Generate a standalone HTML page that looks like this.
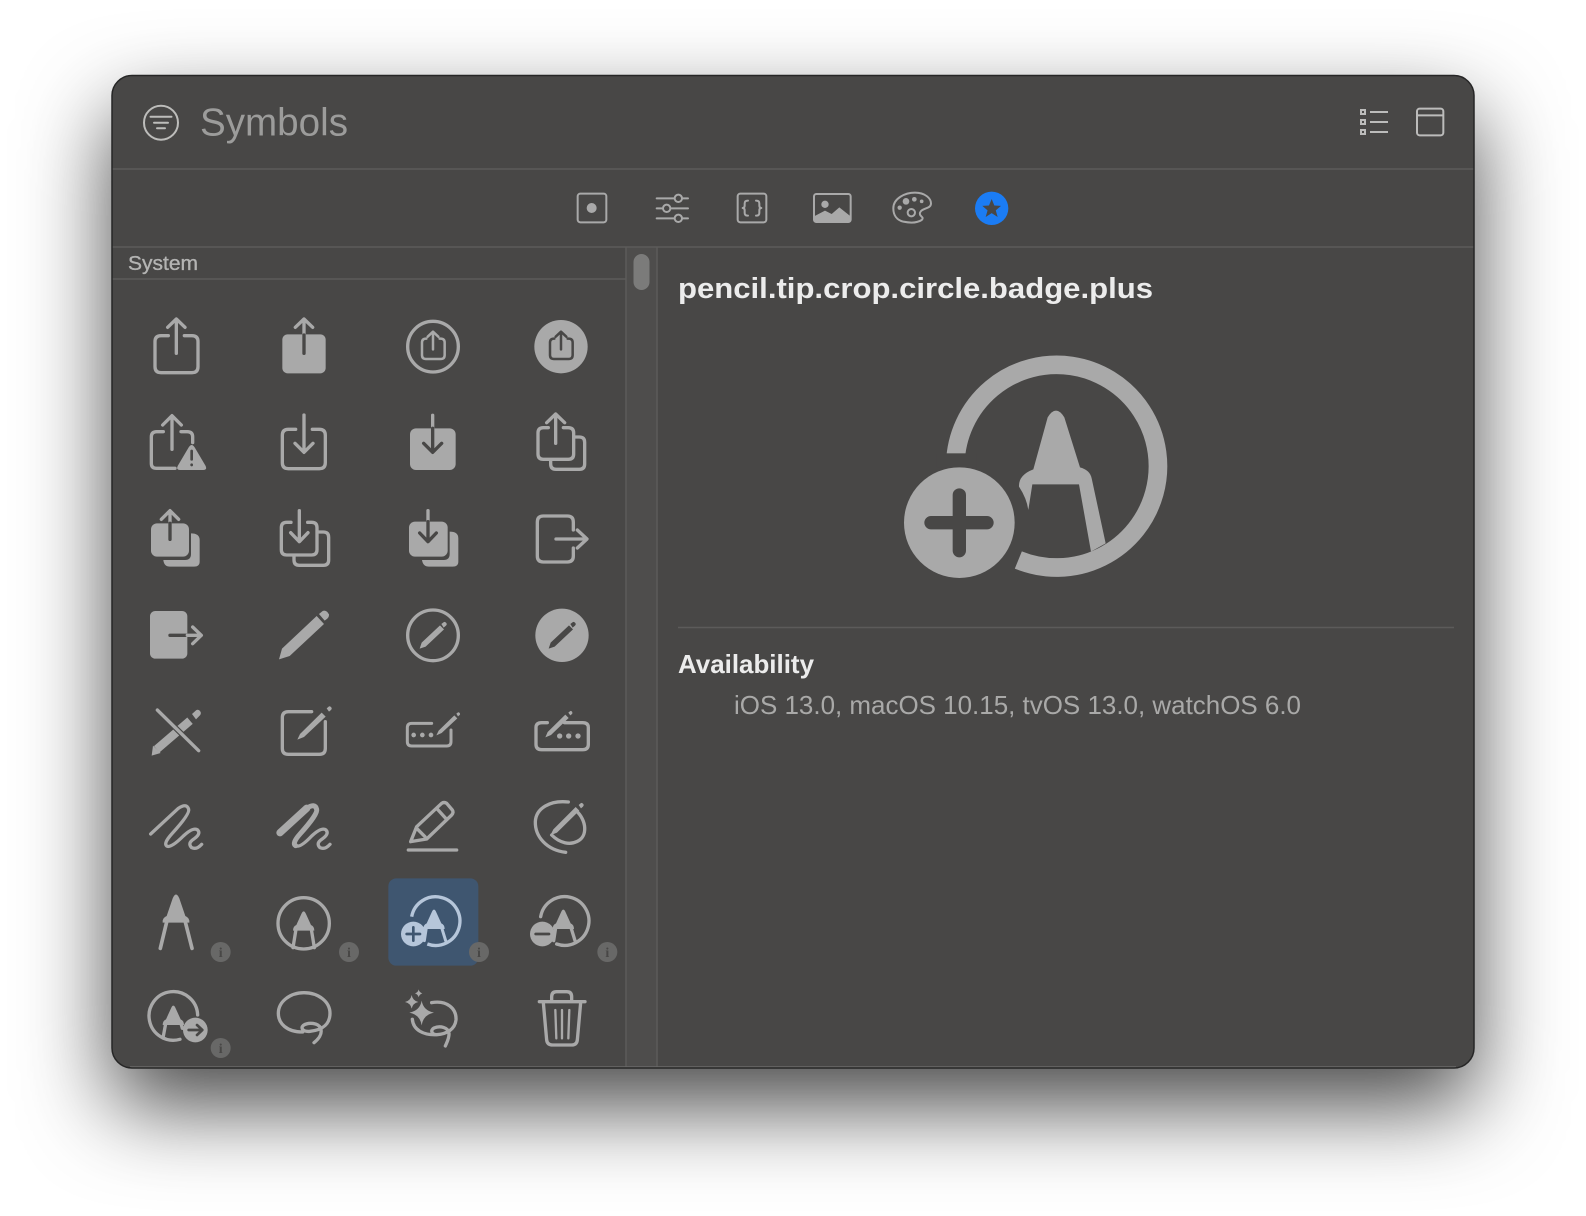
<!DOCTYPE html>
<html lang="en"><head><meta charset="utf-8"><title>Symbols</title>
<style>
html,body{margin:0;padding:0;background:#fff;width:1586px;height:1216px;overflow:hidden}
#win{position:absolute;left:112px;top:75.5px;width:1362px;height:992.5px;border-radius:20px;background:#484746;box-shadow:0 38px 88px rgba(0,0,0,.72)}
svg{position:absolute;left:0;top:0;filter:blur(.35px)}
text{font-family:"Liberation Sans",sans-serif}
.s{fill:none;stroke:#a9a9a9;stroke-width:10;stroke-linecap:round;stroke-linejoin:round}
.f{fill:#a9a9a9}
.d{fill:none;stroke:#484746;stroke-width:10;stroke-linecap:round;stroke-linejoin:round}
.tb{fill:none;stroke:#a9a9a9;stroke-width:6;stroke-linecap:round;stroke-linejoin:round}
.i{fill:#686867}
.it{fill:#484746;font-family:"Liberation Serif",serif;font-weight:bold;font-size:42px;text-anchor:middle}
</style></head><body>
<div id="win"></div>
<svg width="1586" height="1216" viewBox="0 0 1586 1216" xmlns="http://www.w3.org/2000/svg">
<defs><clipPath id="w"><rect x="112" y="75.5" width="1362" height="992.5" rx="20"/></clipPath></defs>
<g clip-path="url(#w)">
<rect x="626" y="247" width="31" height="821" fill="#4e4d4c"/>
<path d="M112 169H1474M112 247H1474M112 279H626M626 247V1068M657 247V1068M678 627.5H1454" stroke="#5c5b5a" stroke-width="1.5" fill="none"/>
<rect x="633.5" y="254" width="16" height="36" rx="8" fill="#7b7b7a"/>
<path d="M130 1067H1456" stroke="#6a6a69" stroke-width="1.5"/>
</g>
<rect x="112" y="75.5" width="1362" height="992.5" rx="20" fill="none" stroke="#262626" stroke-width="1.5"/>

<!-- title bar -->
<circle cx="161" cy="122.7" r="17" fill="none" stroke="#bdbdbb" stroke-width="2"/>
<path d="M150.5 116.7H171.5M154 122.7H168M157 128.3H165" stroke="#bdbdbb" stroke-width="2" stroke-linecap="round"/>
<text x="200" y="135.5" font-size="38.5" fill="#9c9c9b" textLength="148" lengthAdjust="spacingAndGlyphs">Symbols</text>
<text x="128" y="270" font-size="20" fill="#b4b4b3" stroke="#b4b4b3" stroke-width=".35" textLength="70" lengthAdjust="spacingAndGlyphs">System</text>

<g transform="translate(1320,60) scale(.33333)" stroke="#bcbcbb" stroke-width="4" fill="none">
<rect x="120" y="147" width="18" height="18" fill="#bcbcbb" stroke="none"/><rect x="120" y="177" width="18" height="18" fill="#bcbcbb" stroke="none"/><rect x="120" y="207" width="18" height="18" fill="#bcbcbb" stroke="none"/>
<rect x="126" y="153" width="6" height="6" fill="#484746" stroke="none"/><rect x="126" y="183" width="6" height="6" fill="#484746" stroke="none"/><rect x="126" y="213" width="6" height="6" fill="#484746" stroke="none"/>
<path d="M150 156H204M150 186H204M150 216H204" stroke-width="6"/>
<rect x="291" y="146" width="79" height="80" rx="8" stroke-width="6"/><path d="M291 166H370" stroke-width="6"/>
</g>

<!-- toolbar -->
<g transform="translate(550,170) scale(.33333)">
<rect x="83" y="71" width="86" height="86" rx="8" class="tb"/><circle cx="125" cy="114" r="15" class="f"/>
<path class="tb" d="M320 85H372M398 85H414M320 115H336M362 115H414M320 145H372M398 145H414"/>
<circle cx="385" cy="85" r="11" class="tb"/><circle cx="350" cy="115" r="11" class="tb"/><circle cx="385" cy="145" r="11" class="tb"/>
<rect x="563" y="71" width="86" height="86" rx="8" class="tb"/>
<path class="tb" d="M594 92Q584 92 584 100V107Q584 114 578 114Q584 114 584 121V129Q584 137 594 137M618 92Q628 92 628 100V107Q628 114 634 114Q628 114 628 121V129Q628 137 618 137"/>
<rect x="792" y="72" width="110" height="84" rx="7" class="tb"/><circle cx="825" cy="103" r="11" class="f"/>
<path class="f" d="M792 148V139L825 122L845 132L868 112L902 139V148Q902 158 892 158H802Q792 158 792 148Z"/>
<path class="tb" d="M1030 115C1030 85 1065 68 1095 68C1125 68 1143 85 1143 100C1143 118 1115 113 1110 128C1106 140 1125 140 1115 150C1100 160 1075 158 1060 155C1040 150 1030 135 1030 115Z"/>
<circle cx="1068" cy="94" r="10" class="f"/><circle cx="1093" cy="88" r="7" class="f"/><circle cx="1115" cy="94" r="5.5" class="f"/><circle cx="1049" cy="113" r="6.5" class="f"/><circle cx="1084" cy="128" r="11" class="tb"/>
<circle cx="1325" cy="115" r="50" fill="#1b7cf4"/>
<path transform="translate(1325,117)" fill="#484746" d="M0-30L8-10.5L28-9.3L12.3 4L18 24L0 12.5L-18 24L-12.3 4L-28-9.3L-8-10.5Z"/>
</g>

<!-- grid row 1 -->
<g transform="translate(130,70) scale(.33333)">
<path class="s" d="M115 797H93Q75 797 75 815V890Q75 908 93 908H186Q204 908 204 890V815Q204 797 186 797H163M139 750V850M113 772L139 747L165 772"/>
<rect x="457" y="793" width="130" height="117" rx="16" class="f"/>
<path class="s" d="M522 750V795M496 772L522 747L548 772"/><path class="d" d="M522 795V850"/>
<circle cx="909" cy="830" r="76" class="s"/>
<path class="s" style="stroke-width:7.5" d="M889 806H888Q876 806 876 818V855Q876 867 888 867H932Q944 867 944 855V818Q944 806 932 806H929M909 787V838M893 800L909 785L925 800"/>
<circle cx="1293" cy="830" r="80" class="f"/>
<path class="d" style="stroke-width:7.5" d="M1273 806H1272Q1260 806 1260 818V855Q1260 867 1272 867H1316Q1328 867 1328 855V818Q1328 806 1316 806H1313M1293 787V838M1277 800L1293 785L1309 800"/>
</g>

<!-- rows 2-4 -->
<g transform="translate(130,390) scale(.33333)">
<path class="s" d="M100 125H80Q64 125 64 141V220Q64 235 80 235H135M153 125H172Q188 125 188 141V158M126 80V178M98 105L126 77L154 105"/>
<path class="f" d="M176 172Q185 158 194 172L227 228Q232 240 220 240H150Q138 240 143 228Z"/>
<path class="d" style="stroke-width:8" d="M185 183V208M185 224V225"/>
<path class="s" d="M497 118H475Q457 118 457 136V218Q457 236 475 236H568Q586 236 586 218V136Q586 118 568 118H547M522 75V185M495 160L522 187L549 160"/>
<rect x="840" y="115" width="137" height="125" rx="18" class="f"/><path class="s" d="M908 76V115"/><path class="d" d="M908 115V185M881 160L908 187L935 160"/>
<path class="s" d="M1255 113H1240Q1224 113 1224 129V192Q1224 208 1240 208H1315Q1331 208 1331 192V129Q1331 113 1315 113H1300M1333 141H1348Q1364 141 1364 157V222Q1364 238 1348 238H1278Q1262 238 1262 222V210M1277 75V160M1250 98L1277 72L1304 98"/>

<rect x="63" y="400" width="114" height="100" rx="18" class="f"/>
<path class="f" d="M183 430Q209 430 209 450V515Q209 530 192 530H120Q102 530 100 510H165Q183 510 183 492Z"/>
<path class="s" d="M120 365V400M94 388L120 362L146 388"/><path class="d" d="M120 400V448"/>
<path class="s" d="M483 397H470Q454 397 454 413V479Q454 495 470 495H545Q561 495 561 479V413Q561 397 545 397H533M563 426H580Q596 426 596 442V510Q596 526 580 526H508Q492 526 492 510V497M508 362V455M482 428L508 455L534 428"/>
<rect x="837" y="395" width="116" height="105" rx="18" class="f"/>
<path class="f" d="M959 425Q985 425 985 445V515Q985 530 968 530H897Q879 530 876 510H941Q959 510 959 492Z"/>
<path class="s" d="M894 362V395"/><path class="d" d="M894 395V453M869 429L894 455L919 429"/>
<path class="s" d="M1330 420V396Q1330 378 1312 378H1240Q1222 378 1222 396V498Q1222 516 1240 516H1312Q1330 516 1330 498V474M1278 447H1368M1342 420L1371 447L1342 474"/>

<rect x="60" y="663" width="112" height="143" rx="16" class="f"/>
<path class="d" d="M120 736H172"/><path class="s" d="M172 736H212M188 711L214 736L188 761"/>
<path class="f" d="M447 808L456 776L560 678L582 702L479 798ZM567 672L578 663Q586 660 592 666L597 673Q598 680 592 686L584 692Z"/>
<circle cx="909" cy="736" r="76" class="s"/>
<path class="f" d="M869 776L875 758L930 706L942 718L887 770ZM934 702L942 696Q945 695 948 698L950 701Q951 704 948 707L941 713Z"/>
<circle cx="1296" cy="736" r="80" class="f"/>
<path fill="#484746" d="M1256 776L1262 758L1317 706L1329 718L1274 770ZM1321 702L1329 696Q1332 695 1335 698L1337 701Q1338 704 1335 707L1328 713Z"/>
</g>

<!-- rows 5-8 -->
<g transform="translate(130,680) scale(.33333)">
<path stroke="#a9a9a9" stroke-width="25" fill="none" d="M80 208L180 122"/>
<path class="f" d="M65 227L69 197L92 219ZM186 102L198 91Q204 87 209 92L212 96Q214 102 209 107L198 118Z"/>
<path d="M82 90L206 212" stroke="#484746" stroke-width="17" fill="none"/>
<path class="s" d="M82 90L206 212"/>
<path class="s" d="M545 95H475Q457 95 457 113V205Q457 223 475 223H568Q586 223 586 205V125"/>
<path class="f" d="M502 179L510 162L575 98L587 110L522 171ZM590 85L597 79Q600 78 603 81L605 84Q606 87 603 90L597 95Z"/>
<path class="s" style="stroke-width:9" d="M905 130H845Q832 130 832 143V185Q832 198 845 198H950Q963 198 963 185V150"/>
<circle cx="851" cy="165" r="7" class="f"/><circle cx="877" cy="165" r="7" class="f"/><circle cx="903" cy="165" r="7" class="f"/>
<path class="f" d="M919 166L926 152L973 106L982 115L935 159ZM979 101L984 97Q987 96 989 99L990 101Q991 103 989 105L984 109Z"/>
<path class="s" d="M1252 128H1235Q1218 128 1218 143V193Q1218 209 1235 209H1358Q1375 209 1375 193V143Q1375 128 1358 128H1303"/>
<circle cx="1289" cy="168" r="8" class="f"/><circle cx="1316" cy="168" r="8" class="f"/><circle cx="1344" cy="168" r="8" class="f"/>
<path class="f" d="M1246 172L1253 156L1306 104L1316 114L1263 165ZM1315 98L1321 93Q1324 92 1326 95L1327 97Q1328 100 1326 102L1321 106Z"/>

<path class="s" d="M62 462L145 385Q170 368 176 388Q180 402 125 462Q100 490 110 498Q122 506 160 468Q190 440 203 450Q214 462 190 478Q172 490 185 503Q200 510 215 493"/>
<path d="M450 458L530 385" stroke="#a9a9a9" stroke-width="22" stroke-linecap="round" fill="none"/>
<path class="s" style="stroke-width:15" d="M530 385Q555 368 560 388Q564 402 510 462Q485 490 497 497"/>
<path class="s" d="M497 497Q510 505 545 468Q575 440 588 450Q599 462 575 478Q557 490 570 503Q585 510 600 493"/>
<path class="s" d="M835 510H980"/>
<path class="s" d="M842 485L860 440L935 370Q942 365 950 370L967 390Q972 397 965 405L890 477ZM860 445L885 470M920 385L950 418"/>
<path class="s" d="M1307 517C1250 510 1215 470 1216 425C1218 385 1260 360 1315 366M1338 392C1370 420 1375 470 1340 485C1320 495 1290 490 1265 465"/>
<path class="f" d="M1261 466L1270 448L1337 381L1348 392L1281 458ZM1346 375L1353 369Q1356 368 1359 371L1361 374Q1362 377 1359 380L1353 385Z"/>

<!-- pencil tip -->
<path class="f" d="M128 655Q138 632 148 655L166 708Q180 714 178 728H98Q96 714 110 708Z"/>
<path class="s" style="stroke-width:11" d="M111 722L91 805M165 722L186 805"/>
<circle cx="521" cy="730" r="77" class="s"/>
<path class="f" d="M514 702Q521 686 528 702L543 735Q553 739 553 752H489Q489 739 499 735Z"/>
<path class="s" d="M498 748L489 803M544 748L553 803"/>

<rect x="775" y="595" width="270" height="262" rx="24" fill="#3f5670"/>
<path fill="none" stroke="#b6c6da" stroke-width="10" d="M845 710A73 73 0 1 1 892 792"/>
<path fill="#b6c6da" d="M905 697Q912 681 919 697L934 730Q944 734 944 747H880Q880 734 890 730Z"/>
<path fill="none" stroke="#b6c6da" stroke-width="9" stroke-linecap="round" d="M889 743L883 782M935 743L947 782"/>
<circle cx="850" cy="762" r="37" fill="#b6c6da"/>
<path fill="none" stroke="#3f5670" stroke-width="8" stroke-linecap="round" d="M830 762H870M850 742V782"/>

<path class="s" d="M1232 710A73 73 0 1 1 1280 792"/>
<path class="f" d="M1293 697Q1300 681 1307 697L1322 730Q1332 734 1332 747H1268Q1268 734 1278 730Z"/>
<path class="s" d="M1277 743L1271 782M1323 743L1335 782"/>
<circle cx="1237" cy="762" r="37" class="f"/><path class="d" style="stroke-width:8" d="M1217 762H1257"/>

<circle cx="272" cy="816" r="30" class="i"/><text x="272" y="831" class="it">i</text>
<circle cx="657" cy="816" r="30" class="i"/><text x="657" y="831" class="it">i</text>
<circle cx="1047" cy="816" r="30" class="i"/><text x="1047" y="831" class="it">i</text>
<circle cx="1432" cy="816" r="30" class="i"/><text x="1432" y="831" class="it">i</text>

<path class="s" d="M150 1078A73 73 0 1 1 203 1005"/>
<path class="f" d="M123 985Q130 969 137 985L152 1018Q162 1022 162 1035H98Q98 1022 108 1018Z"/>
<path class="s" d="M107 1031L99 1074M153 1031L157 1045"/>
<circle cx="196" cy="1050" r="37" class="f"/><path class="d" style="stroke-width:8" d="M176 1050H216M201 1035L217 1050L201 1065"/>
<circle cx="272" cy="1104" r="30" class="i"/><text x="272" y="1119" class="it">i</text>

<path class="s" d="M518 1056C470 1056 445 1030 445 1000C445 965 480 938 522 938C565 938 600 965 600 1000C600 1030 580 1050 540 1054C520 1056 510 1045 520 1036C535 1026 565 1028 572 1045C578 1062 565 1078 552 1088"/>
<path class="f" d="M875 962Q880 992 912 998Q880 1004 875 1036Q870 1004 838 998Q870 992 875 962ZM845 945Q848 962 865 966Q848 970 845 986Q842 970 825 966Q842 962 845 945ZM866 928Q868 937 877 940Q868 943 866 952Q864 943 855 940Q864 937 866 928Z"/>
<path class="s" d="M905 968C950 960 980 985 978 1020C975 1048 950 1062 920 1064C880 1066 850 1050 847 1018M920 1064C905 1064 900 1050 912 1044C930 1036 955 1042 957 1060C958 1075 950 1088 946 1098"/>
<path class="s" d="M1228 965H1365M1265 963V950Q1265 935 1280 935H1310Q1325 935 1325 950V963M1240 968L1250 1080Q1252 1095 1268 1095H1325Q1340 1095 1342 1080L1352 968"/>
<path class="s" style="stroke-width:7" d="M1276 990L1279 1075M1296 990V1075M1318 990L1315 1075"/>
</g>

<!-- right panel -->
<text x="678" y="298" font-size="29" font-weight="bold" fill="#ececec" textLength="475" lengthAdjust="spacingAndGlyphs">pencil.tip.crop.circle.badge.plus</text>
<g transform="translate(870,330) scale(.33333)">
<path fill="none" stroke="#a9a9a9" stroke-width="56" d="M256 400A304 304 0 1 1 445 690"/>
<rect x="200" y="370" width="120" height="42" fill="#484746"/>
<path class="f" d="M533 262Q558 222 583 262L630 412Q660 420 665 445L707 640L663 665L627 463H487L475 540Q470 505 447 470Q445 435 490 418Z"/>
<circle cx="268" cy="578" r="166" class="f"/>
<path fill="none" stroke="#484746" stroke-width="40" stroke-linecap="round" d="M183 578H351M268 495V662"/>
</g>
<text x="678" y="673" font-size="25.8" font-weight="bold" fill="#ececec" textLength="136" lengthAdjust="spacingAndGlyphs">Availability</text>
<text x="734" y="714" font-size="26" fill="#a9a9a8" textLength="567" lengthAdjust="spacingAndGlyphs">iOS 13.0, macOS 10.15, tvOS 13.0, watchOS 6.0</text>
</svg>
</body></html>
